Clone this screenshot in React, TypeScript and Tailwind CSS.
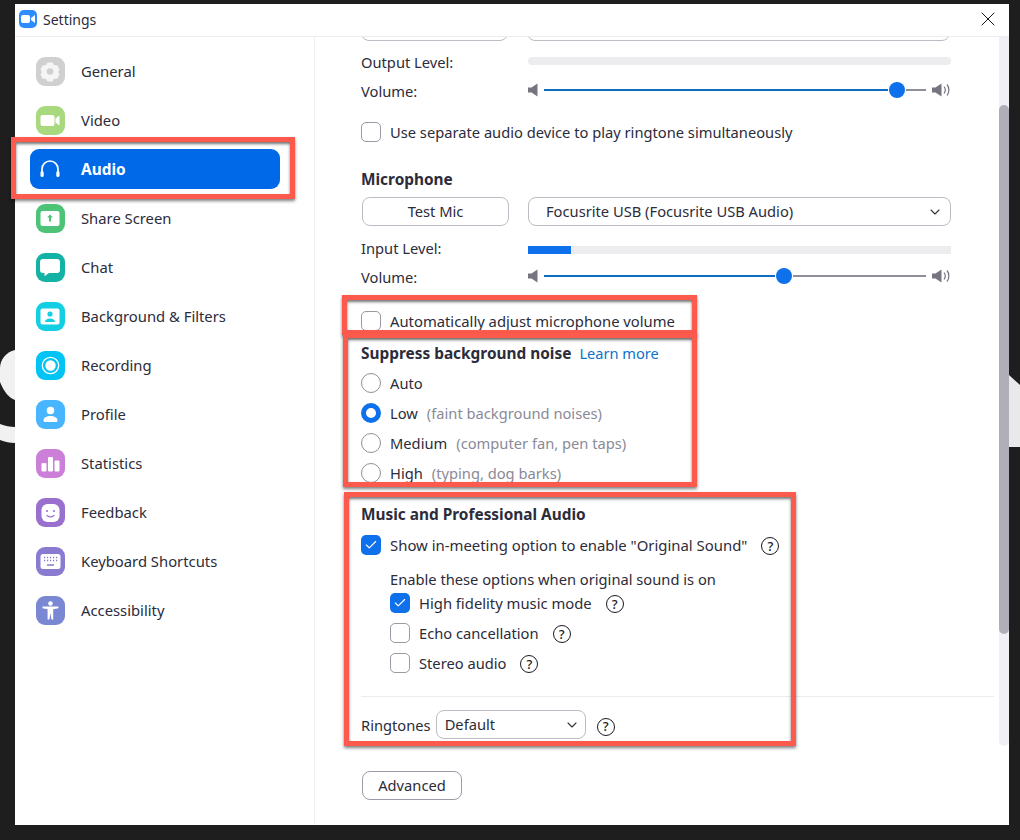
import { ReactNode } from "react";
import { Check, ChevronDown, X } from "lucide-react";

type NavItem = { label: string; bg: string; icon: ReactNode };

const navItems: NavItem[] = [
  {
    label: "General",
    bg: "bg-[#d0d0d0]",
    icon: (
      <path
        fillRule="evenodd"
        d="M11.5 5.5h5l1.6 2.7 3.1.1 2.4 4.2-1.5 2.5 1.5 2.500-2.4 4.200-3.100.1-1.600 2.700h-5l-1.600-2.700-3.100-.1-2.400-4.200 1.500-2.500-1.500-2.500 2.400-4.200 3.100-.1zM14 11.200a3.300 3.300 0 1 0 0 6.600 3.300 3.300 0 0 0 0-6.600z"
        fill="#f5f5f5"
      />
    ),
  },
  {
    label: "Video",
    bg: "bg-[#a8d97f]",
    icon: (
      <path
        d="M6.500 9h10a2 2 0 0 1 2 2v7a2 2 0 0 1-2 2h-10a2 2 0 0 1-2-2v-7a2 2 0 0 1 2-2zm13 3.600 3.200-2.600c.4-.3.800-.1.800.4v8.200c0 .5-.4.700-.8.4l-3.200-2.600z"
        fill="#fff"
      />
    ),
  },
  { label: "Audio", bg: "", icon: null },
  {
    label: "Share Screen",
    bg: "bg-[#4cc377]",
    icon: (
      <>
        <rect x="4.500" y="7" width="19" height="15" rx="2" fill="#fff" />
        <path d="M14 10.500l3 3h-2v4h-2v-4h-2z" fill="#4cc377" />
      </>
    ),
  },
  {
    label: "Chat",
    bg: "bg-[#12b3a5]",
    icon: (
      <path
        d="M7 6h14a3 3 0 0 1 3 3v8a3 3 0 0 1-3 3h-8l-4.500 3.200V20H7a3 3 0 0 1-3-3V9a3 3 0 0 1 3-3z"
        fill="#fff"
      />
    ),
  },
  {
    label: "Background & Filters",
    bg: "bg-[#14cfe4]",
    icon: (
      <>
        <rect x="4.500" y="6.500" width="19" height="16" rx="2" fill="#fff" />
        <circle cx="14" cy="12" r="2.600" fill="#14cfe4" />
        <path d="M9 20c0-2.400 2.200-3.600 5-3.600s5 1.200 5 3.600z" fill="#14cfe4" />
      </>
    ),
  },
  {
    label: "Recording",
    bg: "bg-[#00c4f5]",
    icon: (
      <>
        <circle cx="14.500" cy="14.500" r="8.200" fill="none" stroke="#fff" strokeWidth="1.300" />
        <circle cx="14.500" cy="14.500" r="5.200" fill="#fff" />
      </>
    ),
  },
  {
    label: "Profile",
    bg: "bg-[#47b5ff]",
    icon: (
      <>
        <circle cx="14.500" cy="10.500" r="3.800" fill="#fff" />
        <path d="M7.500 20.500c0-2.800 3.200-4.500 7-4.500s7 1.700 7 4.500c0 1-.8 1.500-1.700 1.500H9.200c-.9 0-1.700-.5-1.700-1.500z" fill="#fff" />
      </>
    ),
  },
  {
    label: "Statistics",
    bg: "bg-[#cb7fd8]",
    icon: (
      <>
        <rect x="5.500" y="14" width="5" height="8.500" rx="1" fill="#fff" />
        <rect x="12" y="8" width="5" height="14.500" rx="1" fill="#fff" />
        <rect x="18.500" y="11.500" width="5" height="11" rx="1" fill="#fff" />
      </>
    ),
  },
  {
    label: "Feedback",
    bg: "bg-[#9a70cf]",
    icon: (
      <>
        <rect x="5.500" y="6" width="18" height="18" rx="6" fill="#fff" />
        <circle cx="11" cy="13" r="1.100" fill="#9a70cf" />
        <circle cx="18" cy="13" r="1.100" fill="#9a70cf" />
        <path d="M11 17.500c2 1.600 5 1.600 7 0" fill="none" stroke="#9a70cf" strokeWidth="1.200" strokeLinecap="round" />
      </>
    ),
  },
  {
    label: "Keyboard Shortcuts",
    bg: "bg-[#8a7bd1]",
    icon: (
      <>
        <rect x="4.500" y="7" width="20" height="15" rx="2.500" fill="#fff" />
        <path
          d="M8 10.500h1.200M11 10.500h1.200M14 10.500h1.200M17 10.500h1.200M20 10.500h1.200M8 13.500h1.200M11 13.500h1.200M14 13.500h1.200M17 13.500h1.200M20 13.500h1.200M11 18h7"
          stroke="#8a7bd1"
          strokeWidth="1.300"
          fill="none"
        />
      </>
    ),
  },
  {
    label: "Accessibility",
    bg: "bg-[#7a88d4]",
    icon: (
      <>
        <circle cx="14.500" cy="7.500" r="2.300" fill="#fff" />
        <path d="M6.500 10.500h16v1.800l-5.300 1v10.200h-1.800l-.9-6h-.2l-.9 6h-1.800V13.300l-5.100-1z" fill="#fff" />
      </>
    ),
  },
];

const Sidebar = () => (
  <div className="flex w-[300px] shrink-0 flex-col border-r border-[#f0f0f2] pt-[10px] text-[14.8px]">
    {navItems.map((item) =>
      item.label === "Audio" ? (
        <div key={item.label} className="flex h-[49px] items-center">
          <div className="-mt-px ml-[15px] flex h-[40px] w-[250px] items-center rounded-[9px] bg-[#0069e8] pl-[8px] text-[15.4px] font-bold text-white">
            <svg width="24" height="24" viewBox="0 0 24 24" fill="none">
              <path d="M4 17v-5a8 8 0 0 1 16 0v5" stroke="#fff" strokeWidth="1.700" />
              <rect x="2.500" y="14" width="3.200" height="6" rx="1.500" fill="#fff" />
              <rect x="18.300" y="14" width="3.200" height="6" rx="1.500" fill="#fff" />
            </svg>
            <span className="ml-[19px] mt-[2px]">{item.label}</span>
          </div>
        </div>
      ) : (
        <div key={item.label} className="flex h-[49px] items-center pl-[21px]">
          <div className={`h-[29px] w-[29px] rounded-[9px] ${item.bg}`}>
            <svg width="29" height="29" viewBox="0 0 29 29">
              {item.icon}
            </svg>
          </div>
          <span className="ml-[16px]">{item.label}</span>
        </div>
      )
    )}
  </div>
);

const Box = ({ checked }: { checked?: boolean }) =>
  checked ? (
    <span className="flex h-[20px] w-[20px] shrink-0 items-center justify-center rounded-[5px] bg-[#0e71eb]">
      <Check size={14} color="#fff" strokeWidth={2} />
    </span>
  ) : (
    <span className="h-[20px] w-[20px] shrink-0 rounded-[5px] border border-[#9a9aa4] bg-white" />
  );

const CheckRow = ({
  label,
  checked,
  className,
}: {
  label: string;
  checked?: boolean;
  className: string;
}) => (
  <div className={`flex items-center ${className}`}>
    <Box checked={checked} />
    <span className="ml-[9px]">{label}</span>
  </div>
);

const Radio = ({
  label,
  hint,
  selected,
}: {
  label: string;
  hint?: string;
  selected?: boolean;
}) => (
  <div className="flex h-[30px] items-center">
    {selected ? (
      <span className="h-[20px] w-[20px] shrink-0 rounded-full border-[5px] border-[#0e71eb] bg-white" />
    ) : (
      <span className="h-[20px] w-[20px] shrink-0 rounded-full border border-[#8f8f98] bg-white" />
    )}
    <span className="ml-[9px]">{label}</span>
    {hint && <span className="ml-[9px] text-[#8a8a96]">{hint}</span>}
  </div>
);

const Help = ({ className }: { className: string }) => (
  <span
    className={`flex h-[18px] w-[18px] shrink-0 items-center justify-center rounded-full border-[1.5px] border-[#1a1a22] text-[13px] font-medium leading-none text-[#1a1a22] ${className}`}
  >
    ?
  </span>
);

const Speaker = ({ loud }: { loud?: boolean }) => (
  <svg width={loud ? 19 : 11} height="14" viewBox={loud ? "0 0 19 14" : "0 0 11 14"} className="shrink-0">
    <path d="M0 4.500h3.500L9.500 0.500v13L3.500 9.500H0z" fill="#75757f" />
    {loud && (
      <path
        d="M12 3.500c1.500 2 1.500 5 0 7M15 1.500c2.500 3 2.500 8 0 11"
        fill="none"
        stroke="#75757f"
        strokeWidth="1.200"
      />
    )}
  </svg>
);

const VolumeRow = ({
  fill,
  rest,
  height,
}: {
  fill: string;
  rest: string;
  height: string;
}) => (
  <div className={`flex items-center ${height}`}>
    <span className="w-[167px]">Volume:</span>
    <div className="-mt-[2px] flex w-[423px] items-center">
      <Speaker />
      <span className={`ml-[5px] h-[2px] bg-[#0e6cc4] ${fill}`} />
      <span className="mx-[1px] h-[16px] w-[16px] shrink-0 rounded-full bg-[#0e71eb]" />
      <span className={`h-[2px] bg-[#8f8f9c] ${rest}`} />
      <span className="ml-[6px]">
        <Speaker loud />
      </span>
    </div>
  </div>
);

const Outline = ({ className }: { className: string }) => (
  <div
    className={`pointer-events-none absolute border-[5px] border-[#fd5a4e] shadow-[0_2px_3px_rgba(0,0,0,0.5),inset_0_2px_3px_rgba(0,0,0,0.55)] ${className}`}
  />
);

const Heading = ({ children, className }: { children: ReactNode; className: string }) => (
  <div className={`flex h-[26px] items-center pt-[2px] text-[15.4px] font-bold ${className}`}>{children}</div>
);

const Content = () => (
  <div className="min-w-0 flex-1 overflow-hidden pl-[46px]">
    {/* speaker row is scrolled off, only the bottom edge still shows */}
    <div className="-mt-[26px] flex h-[30px] items-start">
      <div className="h-[30px] w-[147px] rounded-[8px] border border-[#bcbcc4]" />
      <div className="ml-[19px] h-[30px] w-[423px] rounded-[8px] border border-[#bcbcc4]" />
    </div>
    <div className="mt-[6px] flex h-[30px] items-center">
      <span className="w-[167px]">Output Level:</span>
      <span className="-mt-[2px] h-[8px] w-[423px] rounded-full bg-[#ededf0]" />
    </div>
    <VolumeRow height="h-[28px]" fill="w-[344px]" rest="w-[20px]" />
    <CheckRow className="mt-[14px] h-[26px]" label="Use separate audio device to play ringtone simultaneously" />

    <Heading className="mt-[21px]">Microphone</Heading>
    <div className="mt-[5px] flex h-[29px]">
      <button className="ml-px w-[147px] rounded-[8px] border border-[#bcbcc4] bg-white">Test Mic</button>
      <div className="ml-[19px] flex w-[423px] items-center justify-between rounded-[8px] border border-[#bcbcc4] pl-[17px] pr-[7px]">
        <span>Focusrite USB (Focusrite USB Audio)</span>
        <ChevronDown size={16} strokeWidth={1.6} color="#333" />
      </div>
    </div>
    <div className="mt-[7px] flex h-[30px] items-center">
      <span className="w-[167px]">Input Level:</span>
      <span className="mt-[4px] h-[8px] w-[423px] bg-[#ededf0]">
        <span className="block h-[8px] w-[43px] bg-[#0e71eb]" />
      </span>
    </div>
    <VolumeRow height="h-[28px]" fill="w-[231px]" rest="w-[133px]" />
    <CheckRow className="mt-[17px] h-[26px] text-[14.8px]" label="Automatically adjust microphone volume" />

    <Heading className="mt-[6px]">
      <span>Suppress background noise</span>
      <span className="ml-[8px] text-[14.6px] font-normal text-[#0e72c8]">Learn more</span>
    </Heading>
    <div className="mt-[2px]">
      <Radio label="Auto" />
      <Radio label="Low" hint="(faint background noises)" selected />
      <Radio label="Medium" hint="(computer fan, pen taps)" />
      <Radio label="High" hint="(typing, dog barks)" />
    </div>

    <Heading className="mt-[13px]">Music and Professional Audio</Heading>
    <div className="mt-[5px] flex h-[26px] items-center">
      <Box checked />
      <span className="ml-[9px] text-[14.9px]">Show in-meeting option to enable "Original Sound"</span>
      <Help className="ml-[14px] mt-[2px]" />
    </div>
    <div className="ml-[29px] mt-[11px] flex h-[20px] items-center">Enable these options when original sound is on</div>
    <div className="ml-[29px]">
      <div className="flex h-[28px] items-center">
        <Box checked />
        <span className="ml-[9px] text-[14.8px]">High fidelity music mode</span>
        <Help className="ml-[14px] mt-[2px]" />
      </div>
      <div className="mt-px flex h-[30px] items-center">
        <Box />
        <span className="ml-[9px]">Echo cancellation</span>
        <Help className="ml-[14px] mt-[2px]" />
      </div>
      <div className="flex h-[30px] items-center">
        <Box />
        <span className="ml-[9px]">Stereo audio</span>
        <Help className="ml-[14px] mt-[2px]" />
      </div>
    </div>
    <div className="mr-[5px] mt-[18px] h-px bg-[#ececef]" />
    <div className="mt-[13px] flex h-[29px] items-center">
      <span className="mt-[2px]">Ringtones</span>
      <div className="ml-[5px] flex h-[29px] w-[150px] items-center justify-between rounded-[8px] border border-[#bcbcc4] pl-[8px] pr-[5px]">
        <span>Default</span>
        <ChevronDown size={16} strokeWidth={1.6} color="#333" />
      </div>
      <Help className="ml-[11px] mt-[4px]" />
    </div>
    <button className="ml-px mt-[32px] h-[29px] w-[100px] rounded-[8px] border border-[#9c9ca6] bg-white">Advanced</button>
  </div>
);

export default function App() {
  return (
    <div className="relative h-[840px] w-[1020px] overflow-hidden bg-[#1e1e1e] pl-[15px] pt-[4px] font-['Noto_Sans',sans-serif] text-[14.7px] text-[#2c2c3a]">
      {/* bits of the desktop wallpaper behind the window */}
      <svg className="absolute left-0 top-[340px]" width="15" height="120">
        <path d="M15 10C6 12 0 20 0 28v14c4 10 9 16 15 18V10z" fill="#f1f1f1" />
        <path d="M0 84c5 2 10 3 15 3v16c-5 0-10-1-15-3z" fill="#f1f1f1" />
      </svg>
      <svg className="absolute left-[1009px] top-[370px]" width="11" height="80">
        <path d="M0 5l11 10v62H0z" fill="#e9e9e9" />
      </svg>

      <div className="relative flex h-[821px] w-[994px] flex-col bg-white">
        <div className="flex h-[33px] shrink-0 items-center border-b border-[#ededf0] pb-[2px] pl-[4px] pr-[9px]">
          <div className="flex h-[18px] w-[18px] items-center justify-center rounded-[5px] bg-[#2d8cff]">
            <svg width="14" height="10" viewBox="0 0 14 10">
              <rect x="0" y="1" width="9" height="8" rx="2" fill="#fff" />
              <path d="M10 4l4-3v8l-4-3z" fill="#fff" />
            </svg>
          </div>
          <span className="ml-[6px] text-[14px]">Settings</span>
          <X size={24} strokeWidth={1} color="#111" className="ml-auto" />
        </div>
        <div className="flex min-h-0 flex-1">
          <Sidebar />
          <Content />
          <div className="h-[709px] w-[10px] shrink-0 rounded-b-[5px] bg-[#f0eff6] pt-[68px]">
            <div className="h-[529px] rounded-[5px] bg-[#b0afb8]" />
          </div>
        </div>
      </div>

      <Outline className="left-[11px] top-[137px] h-[62px] w-[284px]" />
      <Outline className="left-[342px] top-[295px] h-[40px] w-[355px]" />
      <Outline className="left-[343px] top-[333px] h-[154px] w-[354px]" />
      <Outline className="left-[344px] top-[492px] h-[254px] w-[452px]" />
    </div>
  );
}
